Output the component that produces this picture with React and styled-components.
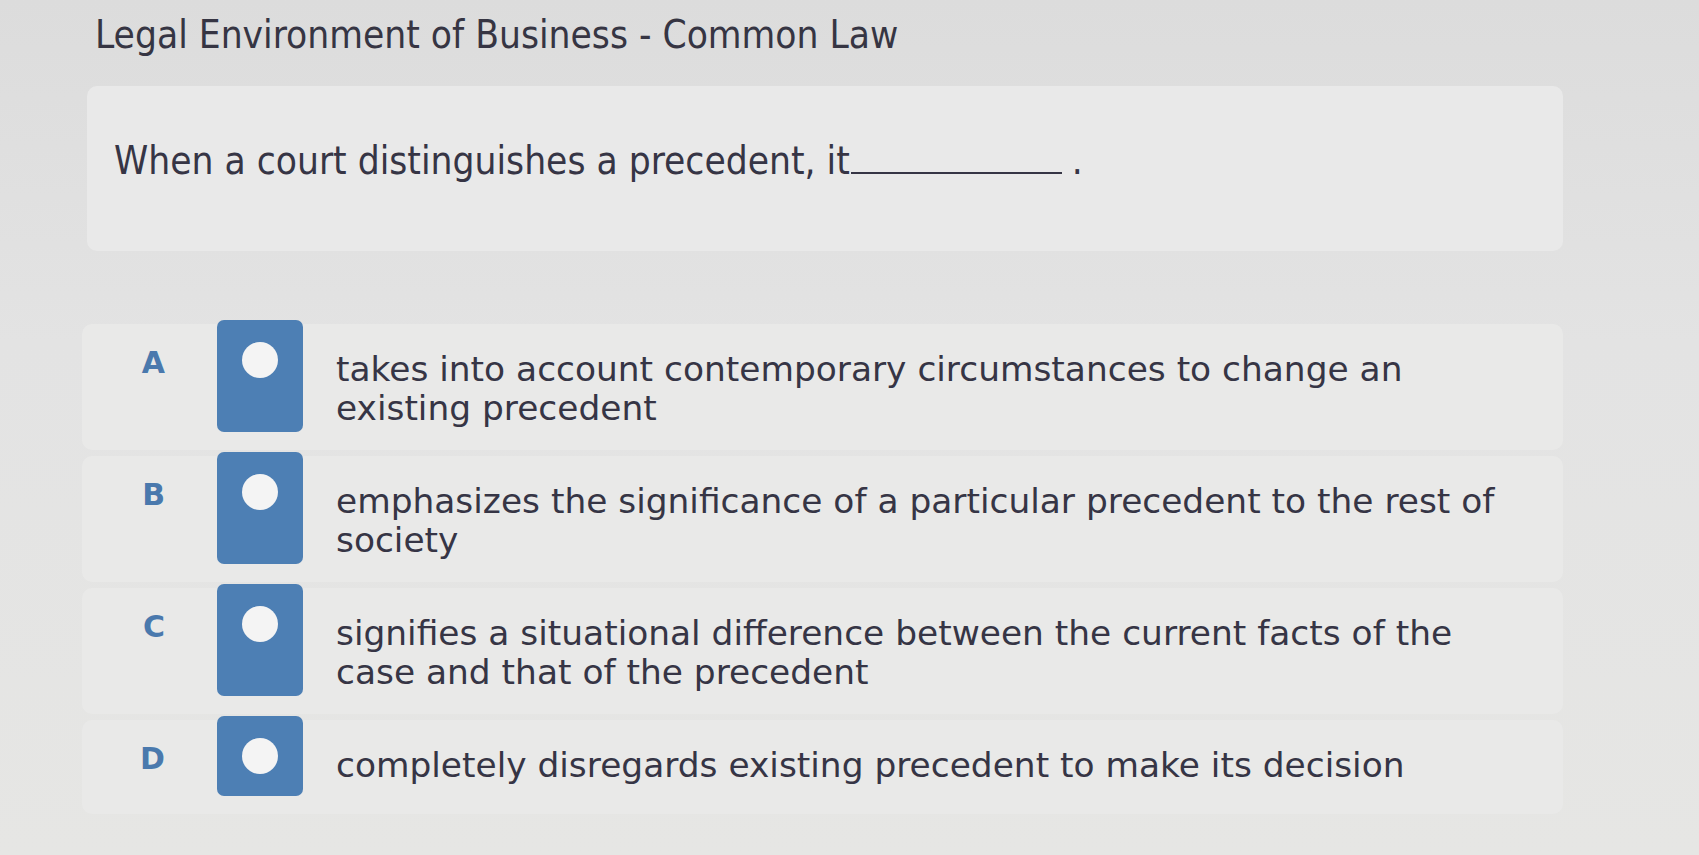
import React from 'react'
import styled, { createGlobalStyle } from 'styled-components'

const Global = createGlobalStyle`
  html, body {
    margin: 0;
    padding: 0;
    background: #e2e2e2;
  }
  body {
    width: 1699px;
    height: 855px;
    overflow: hidden;
    background: linear-gradient(180deg, #dcdcdc 0%, #e3e3e3 40%, #e6e6e4 100%);
  }
`

const Page = styled.div`
  padding: 8px 136px 0 82px;
  color: #363545;
`

const Title = styled.h1`
  margin: 0 0 0 13px;
  font-family: "DejaVu Sans Condensed", "DejaVu Sans", sans-serif;
  font-weight: normal;
  font-size: 38.5px;
  line-height: 54px;
  color: #363543;
`

const QuestionCard = styled.div`
  margin: 24px 0 0 5px;
  height: 165px;
  box-sizing: border-box;
  padding: 50px 0 0 27px;
  background: #e9e9e9;
  border-radius: 10px;
  font-family: "DejaVu Sans Condensed", "DejaVu Sans", sans-serif;
  font-size: 38.5px;
  line-height: 46px;
`

const Blank = styled.span`
  display: inline-block;
  width: 211px;
  border-bottom: 2px solid #363545;
  margin-left: 1px;
  margin-right: 10px;
  height: 36px;
  vertical-align: baseline;
`

const Choices = styled.div`
  margin-top: 73px;
  display: flex;
  flex-direction: column;
  gap: 6px;
`

const ChoiceCard = styled.div`
  display: grid;
  grid-template-columns: 102px 86px 1fr;
  column-gap: 33px;
  padding: 0 0 18px;
  background: #e9e9e8;
  border-radius: 10px;
  font-family: "DejaVu Sans", Verdana, sans-serif;
`

const Letter = styled.div`
  padding: 24px 19px 0 0;
  text-align: right;
  font-weight: bold;
  font-size: 30px;
  line-height: 30px;
  color: #4a79ad;
`

const RadioBox = styled.div`
  margin-top: -4px;
  min-height: 80px;
  background: #4d7fb4;
  border-radius: 7px;
  display: flex;
  justify-content: center;
  align-items: flex-start;
  padding-top: 22px;
  box-sizing: border-box;
`

const Dot = styled.span`
  width: 36px;
  height: 36px;
  border-radius: 50%;
  background: #f4f4f4;
`

const ChoiceText = styled.div`
  padding: 26px 25px 4px 0;
  font-size: 34.4px;
  line-height: 39px;
  color: #363545;
`

const choices = [
  ['A', 'takes into account contemporary circumstances to change an existing precedent'],
  ['B', 'emphasizes the significance of a particular precedent to the rest of society'],
  ['C', 'signifies a situational difference between the current facts of the case and that of the precedent'],
  ['D', 'completely disregards existing precedent to make its decision'],
]

export default function App() {
  return (
    <>
      <Global />
      <Page>
        <Title>Legal Environment of Business - Common Law</Title>
        <QuestionCard>
          When a court distinguishes a precedent, it<Blank />.
        </QuestionCard>
        <Choices>
          {choices.map(([letter, text]) => (
            <ChoiceCard key={letter}>
              <Letter>{letter}</Letter>
              <RadioBox>
                <Dot />
              </RadioBox>
              <ChoiceText>{text}</ChoiceText>
            </ChoiceCard>
          ))}
        </Choices>
      </Page>
    </>
  )
}
